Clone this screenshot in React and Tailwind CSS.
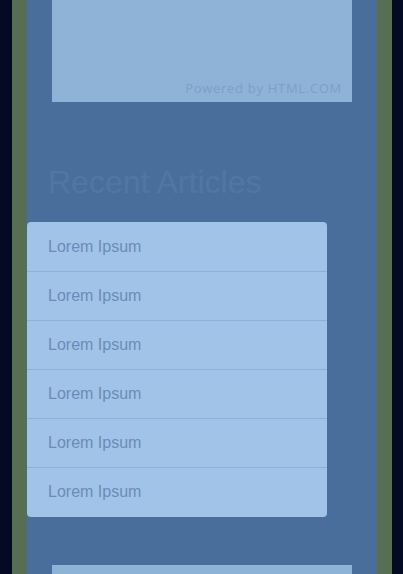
const articles = ["Lorem Ipsum", "Lorem Ipsum", "Lorem Ipsum", "Lorem Ipsum", "Lorem Ipsum", "Lorem Ipsum"];

export default function App() {
    return (
        <div className="h-[574px] overflow-hidden bg-[#050a24] pl-[12px] pr-[11px]">
            <div className="h-full bg-[#566f53] px-[15px]">
                <div className="h-full bg-[#4a6e9b] flex flex-col">
                    <div className="mx-[25px] h-[102px] shrink-0 bg-[#8fb2d7] flex items-end justify-end pr-[10px] pb-[4px]">
                        <span className="font-['Open_Sans',sans-serif] text-[13px] leading-5 tracking-[0.7px] text-[#7e9fc6]">
                            Powered by HTML.COM
                        </span>
                    </div>

                    <h2 className="mt-[62px] ml-[21px] font-['Liberation_Sans',Arial,sans-serif] text-[32px] leading-[36px] text-[#5276a3]">
                        Recent Articles
                    </h2>

                    <ul className="mt-[22px] w-[300px] rounded-[4px] bg-[#a1c3e8] pb-[1px] font-['Liberation_Sans',Arial,sans-serif]">
                        {articles.map((title, i) => (
                            <li
                                key={i}
                                className={`pl-[21px] pt-[14px] pb-[14px] text-[16px] leading-5 text-[#6b8cb6] border-t ${i > 0 ? "border-[#8fb0d6]" : "border-transparent"}`}
                            >
                                {title}
                            </li>
                        ))}
                    </ul>

                    <div className="mt-[48px] mx-[25px] h-[102px] shrink-0 bg-[#8fb2d7]" />
                </div>
            </div>
        </div>
    );
}
